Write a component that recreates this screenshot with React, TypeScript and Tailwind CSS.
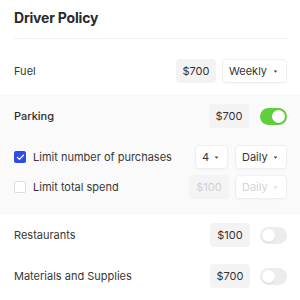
import { Check } from "lucide-react";

function Amount({ value, disabled = false }: { value: string; disabled?: boolean }) {
  return (
    <div
      className={`h-[24px] w-[40px] rounded-[4px] flex items-center justify-center text-[11px] ${
        disabled ? "bg-[#f4f4f4] text-[#d0d0d0]" : "bg-[#f3f3f3] text-[#333]"
      }`}
    >
      {value}
    </div>
  );
}

function Select({ label, width, disabled = false }: { label: string; width: string; disabled?: boolean }) {
  return (
    <div
      className={`h-[24px] ${width} rounded-[4px] border border-[#efefef] bg-white shadow-[0_1px_2px_rgba(0,0,0,0.03)] flex items-center justify-between pl-[6px] pr-[8px] text-[11px] ${
        disabled ? "text-[#d4d4d4]" : "text-[#333]"
      }`}
    >
      <span>{label}</span>
      <svg width="5" height="3" viewBox="0 0 6 4">
        <path d="M0.5 0.5 L3 3.5 L5.5 0.5 Z" fill={disabled ? "#d4d4d4" : "#444"} />
      </svg>
    </div>
  );
}

function Toggle({ on }: { on: boolean }) {
  return (
    <div
      className={`h-[17px] w-[27px] rounded-full p-[2px] flex ${
        on ? "bg-[#5fcf3e] justify-end" : "bg-[#ececec] justify-start"
      }`}
    >
      <div className="h-[13px] w-[13px] rounded-full bg-white shadow-[0_1px_1px_rgba(0,0,0,0.1)]" />
    </div>
  );
}

function Checkbox({ checked }: { checked: boolean }) {
  return checked ? (
    <div className="h-[12px] w-[12px] rounded-[2px] bg-[#2f4de6] flex items-center justify-center">
      <Check className="w-[9px] h-[9px] text-white" strokeWidth={3.5} />
    </div>
  ) : (
    <div className="h-[12px] w-[12px] rounded-[2px] border border-[#dcdcdc] bg-white" />
  );
}

export default function App() {
  return (
    <div className="w-[300px] h-[300px] bg-white overflow-hidden font-['Inter',sans-serif] text-[11px] text-[#383838]">
      <div className="pl-[14px] pr-[13px] pt-[8px]">
        <h1 className="text-[14px] font-bold tracking-[-0.2px] text-[#2a2a2a] leading-[20px]">Driver Policy</h1>
        <div className="mt-[10px] border-t border-[#f0f0f0]" />
        <div className="mt-[20px] mb-[11px] h-[24px] flex items-center">
          <span className="flex-1">Fuel</span>
          <div className="flex items-center gap-[6px]">
            <Amount value="$700" />
            <Select label="Weekly" width="w-[65px]" />
          </div>
        </div>
      </div>

      <section className="bg-[#fafafa] pl-[14px] pr-[13px] pt-[10px] pb-[16px]">
        <div className="h-[24px] flex items-center">
          <span className="flex-1 font-medium text-[#2e2e2e]">Parking</span>
          <div className="flex items-center gap-[11px]">
            <Amount value="$700" />
            <Toggle on />
          </div>
        </div>
        <div className="mt-[17px] h-[24px] flex items-center">
          <Checkbox checked />
          <span className="flex-1 ml-[7px]">Limit number of purchases</span>
          <div className="flex items-center gap-[7px]">
            <Select label="4" width="w-[33px]" />
            <Select label="Daily" width="w-[52px]" />
          </div>
        </div>
        <div className="mt-[6px] h-[24px] flex items-center">
          <Checkbox checked={false} />
          <span className="flex-1 ml-[7px]">Limit total spend</span>
          <div className="flex items-center gap-[6px]">
            <Amount value="$100" disabled />
            <Select label="Daily" width="w-[52px]" disabled />
          </div>
        </div>
      </section>

      <div className="pl-[14px] pr-[13px]">
        <div className="mt-[8px] h-[24px] flex items-center">
          <span className="flex-1">Restaurants</span>
          <div className="flex items-center gap-[10px]">
            <Amount value="$100" />
            <Toggle on={false} />
          </div>
        </div>
        <div className="mt-[17px] h-[24px] flex items-center">
          <span className="flex-1">Materials and Supplies</span>
          <div className="flex items-center gap-[10px]">
            <Amount value="$700" />
            <Toggle on={false} />
          </div>
        </div>
      </div>
    </div>
  );
}
